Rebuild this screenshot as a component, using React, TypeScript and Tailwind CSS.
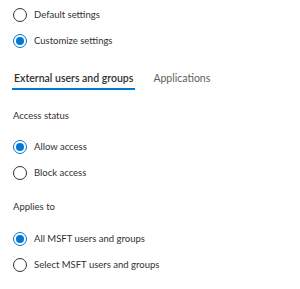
import { useState } from "react";

function Radio({
  label,
  checked,
  onClick,
}: {
  label: string;
  checked: boolean;
  onClick: () => void;
}) {
  return (
    <button
      type="button"
      onClick={onClick}
      className="flex h-[26px] items-center gap-[7px] text-left"
    >
      <span
        className={
          "flex h-[14px] w-[14px] items-center justify-center rounded-full border " +
          (checked ? "border-[#0078d4]" : "border-[#323130]")
        }
      >
        {checked && <span className="h-[8px] w-[8px] rounded-full bg-[#0078d4]" />}
      </span>
      <span className="text-[9.5px] leading-[12px] text-[#323130]">{label}</span>
    </button>
  );
}

export default function App() {
  const [mode, setMode] = useState("custom");
  const [tab, setTab] = useState("users");
  const [access, setAccess] = useState("allow");
  const [applies, setApplies] = useState("all");

  const tabCls = (on: boolean) =>
    "h-[22px] border-b-2 px-[2px] text-[10.5px] leading-[12px] " +
    (on ? "border-[#0078d4] font-semibold text-[#323130]" : "border-transparent text-[#605e5c]");

  return (
    <div
      className="h-[289px] w-[300px] bg-white pl-[13px] pt-[2px]"
      style={{ fontFamily: 'Lato, "Open Sans", sans-serif' }}
    >
      <div className="flex flex-col items-start">
        <Radio label="Default settings" checked={mode === "default"} onClick={() => setMode("default")} />
        <Radio label="Customize settings" checked={mode === "custom"} onClick={() => setMode("custom")} />
      </div>

      <div className="-ml-[1px] mt-[14px] flex gap-[16px]">
        <button type="button" onClick={() => setTab("users")} className={tabCls(tab === "users")}>
          External users and groups
        </button>
        <button type="button" onClick={() => setTab("apps")} className={tabCls(tab === "apps")}>
          Applications
        </button>
      </div>

      <div className="mt-[20px] text-[9.5px] leading-[12px] text-[#323130]">Access status</div>
      <div className="mt-[12px] flex flex-col items-start">
        <Radio label="Allow access" checked={access === "allow"} onClick={() => setAccess("allow")} />
        <Radio label="Block access" checked={access === "block"} onClick={() => setAccess("block")} />
      </div>

      <div className="mt-[15px] text-[9.5px] leading-[12px] text-[#323130]">Applies to</div>
      <div className="mt-[13px] flex flex-col items-start">
        <Radio label="All MSFT users and groups" checked={applies === "all"} onClick={() => setApplies("all")} />
        <Radio label="Select MSFT users and groups" checked={applies === "select"} onClick={() => setApplies("select")} />
      </div>
    </div>
  );
}
